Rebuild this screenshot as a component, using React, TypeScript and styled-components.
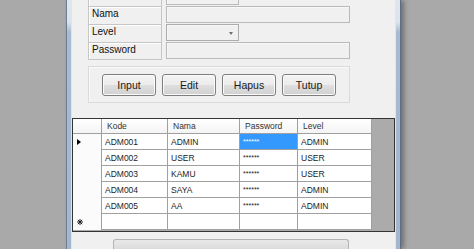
import React from "react";
import styled, { createGlobalStyle } from "styled-components";

const GlobalStyle = createGlobalStyle`
  html, body {
    margin: 0;
    padding: 0;
    background: #a9a9a9;
    overflow: hidden;
  }
  body {
    font-family: "Liberation Sans", Arial, sans-serif;
  }
`;

const Desktop = styled.div`
  width: 474px;
  height: 249px;
  display: flex;
  padding-left: 66px;
  box-sizing: border-box;
`;

const Window = styled.div`
  display: flex;
  height: 249px;
  box-shadow: 3px 0 5px rgba(0, 0, 0, 0.35);
`;

const Frame = styled.div<{ $side: "left" | "right" }>`
  width: 6px;
  box-sizing: border-box;
  background: linear-gradient(
    to bottom,
    #dfe6ee 0,
    #dbe3ec 22px,
    #a9bbd0 32px,
    #a3b6cc 100%
  );
  border-left: 1px solid ${(p) => (p.$side === "left" ? "#6d7d92" : "#dde5ee")};
  border-right: 1px solid ${(p) => (p.$side === "left" ? "#dde5ee" : "#5d6d82")};
`;

const Client = styled.div`
  width: 323px;
  background: #f0f0f0;
  display: flex;
  flex-direction: column;
  overflow: hidden;
`;

const FormArea = styled.div`
  height: 115px;
  overflow: hidden;
  padding-left: 16px;
  box-sizing: border-box;
`;

const FieldTable = styled.div`
  display: grid;
  grid-template-columns: 74px 190px;
  grid-auto-rows: 18px;
  margin-top: -12px;
`;

const LabelCell = styled.div<{ $last?: boolean }>`
  box-sizing: border-box;
  border: 1px solid #c6c6c6;
  border-bottom: ${(p) => (p.$last ? "1px solid #c6c6c6" : "none")};
  box-shadow: inset 1px 1px 0 #ffffff;
  padding: 1px 0 0 3px;
  font-size: 10px;
  line-height: 12px;
  color: #111;
`;

const InputCell = styled.div`
  padding-left: 4px;
  display: flex;
  align-items: flex-start;
`;

const TextBox = styled.div<{ $width: number }>`
  width: ${(p) => p.$width}px;
  height: 17px;
  box-sizing: border-box;
  border: 1px solid #bababa;
  background: #f0f0f0;
  box-shadow: inset 1px 1px 0 #f7f7f7;
`;

const ComboBox = styled(TextBox)`
  position: relative;
  border-color: #acacac;
`;

const ComboArrow = styled.span`
  position: absolute;
  right: 5px;
  top: 7px;
  border-left: 2px solid transparent;
  border-right: 2px solid transparent;
  border-top: 3px solid #707070;
`;

const ButtonPanel = styled.div`
  margin-top: 6px;
  width: 262px;
  height: 37px;
  box-sizing: border-box;
  border: 1px solid #dadada;
  box-shadow: inset 1px 1px 0 #fafafa;
  display: flex;
  gap: 6px;
  padding: 7px 0 0 13px;
`;

const Button = styled.button`
  width: 54px;
  height: 22px;
  padding: 0;
  box-sizing: border-box;
  border: 1px solid #7e7e7e;
  border-radius: 3px;
  background: linear-gradient(
    to bottom,
    #f4f4f4 0%,
    #ececec 48%,
    #dedede 52%,
    #d1d1d1 100%
  );
  box-shadow: inset 0 0 0 1px #fbfbfb;
  font-family: "Liberation Sans", Arial, sans-serif;
  font-size: 10.5px;
  color: #1a1a1a;
`;

const GridView = styled.div`
  margin-top: 12px;
  width: 323px;
  height: 123px;
  box-sizing: border-box;
  border: 1px solid #343434;
  background: #ababab;
`;

const GridBody = styled.div`
  display: grid;
  grid-template-columns: 29px 66px 72px 58px 74px;
  grid-template-rows: 15px repeat(6, 16px);
  justify-content: start;
  align-content: start;
  font-size: 8.5px;
  color: #1c1c1c;
`;

const HeaderCell = styled.div`
  box-sizing: border-box;
  background: linear-gradient(to bottom, #ffffff, #f4f4f4);
  border-right: 1px solid #a0a0a0;
  border-bottom: 1px solid #a0a0a0;
  padding-left: 5px;
  display: flex;
  align-items: center;
  color: #333;
`;

const RowHeader = styled.div`
  box-sizing: border-box;
  background: #fbfbfb;
  border-right: 1px solid #a0a0a0;
  padding-left: 4px;
  display: flex;
  align-items: center;
`;

const Cell = styled.div<{ $selected?: boolean; $secret?: boolean }>`
  box-sizing: border-box;
  background: ${(p) => (p.$selected ? "#3399ff" : "#ffffff")};
  color: ${(p) => (p.$selected ? "#ffffff" : "#1c1c1c")};
  border-right: 1px solid #a0a0a0;
  border-bottom: 1px solid #a0a0a0;
  padding-left: 3px;
  font-size: ${(p) => (p.$secret ? "7px" : "8.5px")};
  display: flex;
  align-items: center;
`;

const CurrentRowMark = styled.span`
  width: 0;
  height: 0;
  border-left: 4px solid #000;
  border-top: 3px solid transparent;
  border-bottom: 3px solid transparent;
`;

const BottomStrip = styled.div`
  flex: 1;
  padding: 7px 0 0 41px;
`;

const BottomButton = styled.div`
  width: 236px;
  height: 10px;
  box-sizing: border-box;
  border: 1px solid #b4b4b4;
  border-bottom: none;
  border-radius: 3px 3px 0 0;
  background: linear-gradient(to bottom, #e9e9e9, #dcdcdc);
`;

const NewRowIcon = () => (
  <svg width="6" height="6" viewBox="0 0 6 6">
    <g stroke="#222" strokeWidth="1" strokeLinecap="square">
      <line x1="3" y1="0.5" x2="3" y2="5.5" />
      <line x1="0.5" y1="3" x2="5.5" y2="3" />
      <line x1="1.2" y1="1.2" x2="4.8" y2="4.8" />
      <line x1="4.8" y1="1.2" x2="1.2" y2="4.8" />
    </g>
  </svg>
);

const users = [
  { kode: "ADM001", nama: "ADMIN", level: "ADMIN" },
  { kode: "ADM002", nama: "USER", level: "USER" },
  { kode: "ADM003", nama: "KAMU", level: "USER" },
  { kode: "ADM004", nama: "SAYA", level: "ADMIN" },
  { kode: "ADM005", nama: "AA", level: "ADMIN" },
];

export default function App() {
  return (
    <>
      <GlobalStyle />
      <Desktop>
        <Window>
          <Frame $side="left" />
          <Client>
            <FormArea>
              <FieldTable>
                <LabelCell />
                <InputCell>
                  <TextBox $width={73} />
                </InputCell>
                <LabelCell>Nama</LabelCell>
                <InputCell>
                  <TextBox $width={184} />
                </InputCell>
                <LabelCell>Level</LabelCell>
                <InputCell>
                  <ComboBox $width={73}>
                    <ComboArrow />
                  </ComboBox>
                </InputCell>
                <LabelCell $last>Password</LabelCell>
                <InputCell>
                  <TextBox $width={184} />
                </InputCell>
              </FieldTable>
              <ButtonPanel>
                <Button>Input</Button>
                <Button>Edit</Button>
                <Button>Hapus</Button>
                <Button>Tutup</Button>
              </ButtonPanel>
            </FormArea>

            <GridView>
              <GridBody>
                <HeaderCell />
                <HeaderCell>Kode</HeaderCell>
                <HeaderCell>Nama</HeaderCell>
                <HeaderCell>Password</HeaderCell>
                <HeaderCell>Level</HeaderCell>
                {users.map((u, i) => (
                  <React.Fragment key={u.kode}>
                    <RowHeader>{i === 0 && <CurrentRowMark />}</RowHeader>
                    <Cell>{u.kode}</Cell>
                    <Cell>{u.nama}</Cell>
                    <Cell $secret $selected={i === 0}>
                      ******
                    </Cell>
                    <Cell>{u.level}</Cell>
                  </React.Fragment>
                ))}
                <RowHeader>
                  <NewRowIcon />
                </RowHeader>
                <Cell />
                <Cell />
                <Cell />
                <Cell />
              </GridBody>
            </GridView>

            <BottomStrip>
              <BottomButton />
            </BottomStrip>
          </Client>
          <Frame $side="right" />
        </Window>
      </Desktop>
    </>
  );
}
